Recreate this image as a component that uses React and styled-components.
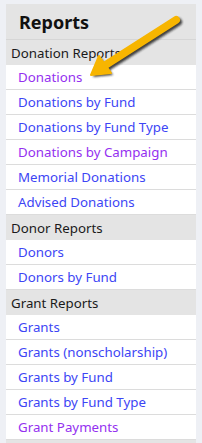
import React from 'react'
import styled, { createGlobalStyle } from 'styled-components'

const GlobalStyle = createGlobalStyle`
  html, body {
    margin: 0;
    padding: 0;
    background: #eef0f5;
    font-family: "Noto Sans", "DejaVu Sans", sans-serif;
  }
`

const sections = [
  {
    title: 'Donation Reports',
    links: [
      { label: 'Donations', visited: true },
      { label: 'Donations by Fund' },
      { label: 'Donations by Fund Type' },
      { label: 'Donations by Campaign', visited: true },
      { label: 'Memorial Donations' },
      { label: 'Advised Donations' },
    ],
  },
  {
    title: 'Donor Reports',
    links: [{ label: 'Donors' }, { label: 'Donors by Fund' }],
  },
  {
    title: 'Grant Reports',
    links: [
      { label: 'Grants' },
      { label: 'Grants (nonscholarship)' },
      { label: 'Grants by Fund' },
      { label: 'Grants by Fund Type' },
      { label: 'Grant Payments', visited: true },
    ],
  },
]

export default function App() {
  return (
    <>
      <GlobalStyle />
      <Page>
        <Panel>
          <Title>Reports</Title>
          {sections.map((s) => (
            <Section key={s.title}>
              <SectionHeader>{s.title}</SectionHeader>
              {s.links.map((l) => (
                <Row key={l.label}>
                  <Link href="#" $visited={l.visited}>{l.label}</Link>
                </Row>
              ))}
            </Section>
          ))}
          <NextHeader />
          <Arrow viewBox="0 0 202 100" width="202" height="100">
            <defs>
              <filter id="sh" x="-20%" y="-20%" width="140%" height="140%">
                <feGaussianBlur stdDeviation="1.2" />
              </filter>
            </defs>
            <g transform="translate(2,2)" filter="url(#sh)" opacity="0.85">
              <line x1="176" y1="20" x2="104" y2="66" stroke="#222" strokeWidth="8" strokeLinecap="round" />
              <polygon points="91,75 99,56 111,73" fill="#222" />
            </g>
            <line x1="176" y1="20" x2="104" y2="66" stroke="#f7b500" strokeWidth="8" strokeLinecap="round" />
            <polygon points="91,75 99,56 111,73" fill="#f7b500" stroke="#f7b500" strokeWidth="2" strokeLinejoin="round" />
          </Arrow>
        </Panel>
      </Page>
    </>
  )
}

const Page = styled.div`
  padding: 4px 6px 0 6px;
  height: 443px;
  overflow: hidden;
  box-sizing: border-box;
`

const Panel = styled.div`
  position: relative;
  width: 190px;
  background: #ffffff;
`

const Title = styled.div`
  height: 36px;
  display: flex;
  align-items: center;
  padding-left: 13px;
  background: #e4e4e4;
  font-size: 18px;
  font-weight: 700;
  color: #111;
  border-bottom: 1px solid #d6d6d6;
  box-sizing: border-box;
`

const Section = styled.div`
  display: flex;
  flex-direction: column;
`

const SectionHeader = styled.div`
  height: 25px;
  display: flex;
  align-items: center;
  padding-left: 5px;
  background: #e4e4e4;
  font-size: 13.3px;
  color: #1a1a1a;
  box-sizing: border-box;
`

const NextHeader = styled.div`
  height: 25px;
  background: #e4e4e4;
`

const Row = styled.div`
  height: 25px;
  display: flex;
  align-items: center;
  padding-left: 12px;
  border-bottom: 1px solid #dcdcdc;
  box-sizing: border-box;
  background: #fff;
`

const Link = styled.a`
  font-size: 13.3px;
  text-decoration: none;
  color: ${(p) => (p.$visited ? '#9430f0' : '#3d45f5')};
`

const Arrow = styled.svg`
  position: absolute;
  left: -6px;
  top: -4px;
  pointer-events: none;
`
